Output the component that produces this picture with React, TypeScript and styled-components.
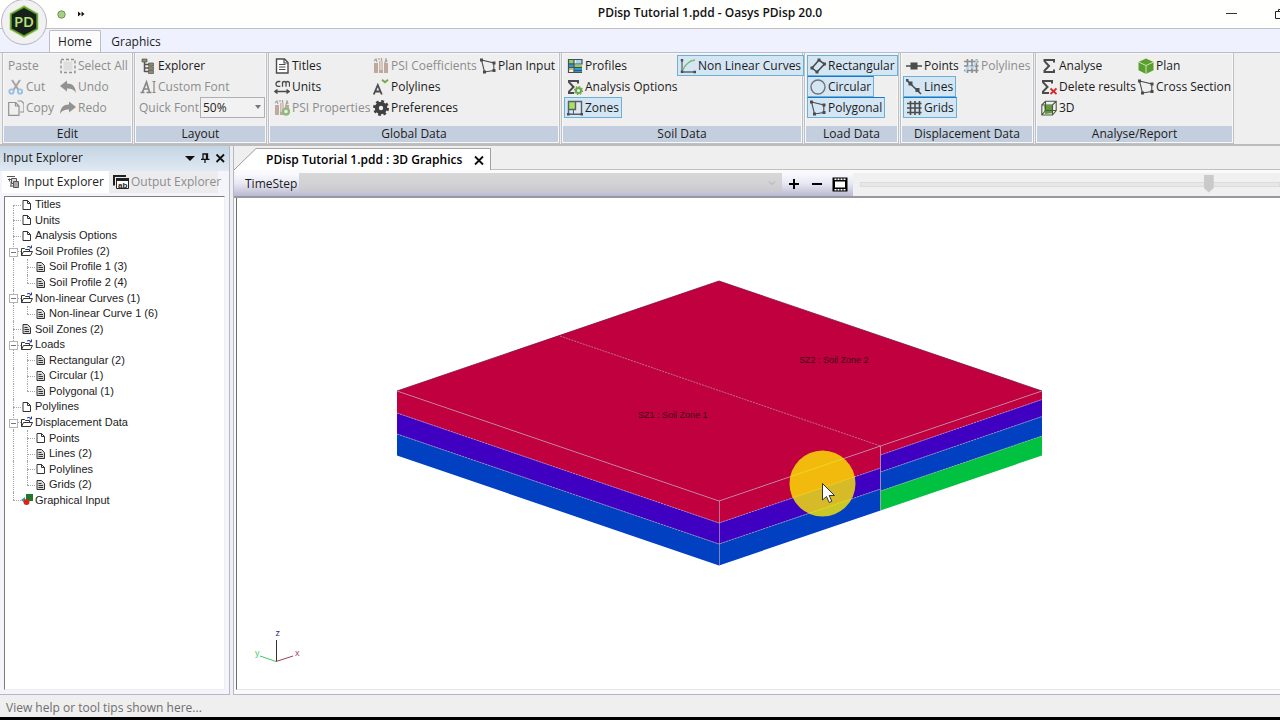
import React from "react";
import styled, { createGlobalStyle } from "styled-components";

const uiFont = `"Open Sans", "Noto Sans", sans-serif`;
const classicFont = `"Liberation Sans", Arial, sans-serif`;

const GlobalStyle = createGlobalStyle`
  * { box-sizing: border-box; }
  body { margin: 0; background: #efefef; overflow: hidden; }
  button, select, input { font: inherit; color: inherit; margin: 0; }
`;

const Window = styled.div`
  display: flex;
  flex-direction: column;
  height: 100vh;
  overflow: hidden;
  font: 12px/16px ${uiFont};
  color: #1c1c1c;
  background: #efefef;
  border-bottom: 3px solid #000;
`;

/* ---------- title bar ---------- */

const Header = styled.header`
  position: relative;
  flex: none;
`;

const TitleBar = styled.div`
  display: flex;
  height: 28px;
  align-items: center;
  background: #fffffd;
`;

const QuickAccess = styled.div`
  display: flex;
  align-items: center;
  gap: 11px;
  width: 204px;
  padding-left: 57px;
  height: 26px;
`;

const Title = styled.h1`
  flex: 1;
  margin: 0;
  padding-bottom: 2px;
  text-align: center;
  font: 600 12px/16px ${uiFont};
  color: #111;
`;

const WindowControls = styled.div`
  display: flex;
  width: 64px;
  gap: 28px;
  padding-left: 5px;
  overflow: hidden;
`;

const PlainButton = styled.button`
  display: flex;
  align-items: center;
  justify-content: center;
  flex: none;
  padding: 0;
  border: 0;
  background: none;
`;

const Orb = styled.button`
  position: absolute;
  left: 1px;
  top: -1px;
  width: 46px;
  height: 46px;
  padding: 0;
  border: 1px solid #b4b4bc;
  border-radius: 50%;
  background: #f1f1f4;
  z-index: 2;
  svg { display: block; }
`;

const TabStrip = styled.nav`
  display: flex;
  align-items: flex-end;
  height: 24px;
  padding-left: 49px;
  border-top: 1px solid #c0c0c4;
  background: #eff1ff;
`;

const RibbonTab = styled.button<{ $active?: boolean }>`
  height: 22px;
  width: ${(p) => (p.$active ? 52 : 70)}px;
  padding: 0;
  border: 1px solid ${(p) => (p.$active ? "#bcbcc2" : "transparent")};
  border-bottom: 0;
  border-radius: 2px 2px 0 0;
  background: ${(p) => (p.$active ? "#fcfcfc" : "transparent")};
`;

/* ---------- ribbon ---------- */

const Ribbon = styled.div`
  display: flex;
  gap: 1px;
  flex: none;
  height: 94px;
  padding: 0 2px;
  border-top: 1px solid #b8bcc8;
  border-bottom: 2px solid #bcbcbc;
  background: #efefef;
`;

const Group = styled.section<{ $width: number }>`
  display: flex;
  flex-direction: column;
  flex: none;
  width: ${(p) => p.$width}px;
  border: 1px solid #bdc1c6;
  border-top: 0;
  box-shadow: inset 0 0 0 1px #f8f8f8;
`;

const GroupBody = styled.div<{ $columns: string }>`
  display: grid;
  grid-template-columns: ${(p) => p.$columns};
  flex: 1;
  padding: 2px 0 0 2px;
`;

const GroupCaption = styled.h2`
  margin: 0 1px 1px;
  height: 16px;
  text-align: center;
  font: 400 12px/16px ${uiFont};
  background: #c3cfdf;
`;

const Column = styled.div`
  display: flex;
  flex-direction: column;
  align-items: flex-start;
  min-width: 0;
`;

const ToolButton = styled.button`
  display: flex;
  align-items: center;
  gap: 2px;
  height: 21px;
  padding: 0 2px;
  border: 1px solid transparent;
  background: none;
  white-space: nowrap;
  line-height: 18px;
  svg { flex: none; display: block; }

  &:disabled { color: #8d8d8d; }
  &:disabled svg { opacity: 0.6; }
  &[aria-pressed="true"] {
    border-color: #6db0d6;
    background: #d4e6f4;
  }
  &[aria-pressed="true"] + &[aria-pressed="true"] {
    border-top-color: #1478d0;
  }
`;

const QuickFontRow = styled.div`
  display: flex;
  align-items: center;
  gap: 1px;
  height: 21px;
  padding-left: 2px;
  color: #8d8d8d;
`;

const SelectBox = styled.span`
  position: relative;
  display: flex;
  svg { position: absolute; right: 4px; top: 8px; pointer-events: none; }
`;

const FontSelect = styled.select`
  appearance: none;
  width: 65px;
  height: 21px;
  padding: 0 2px;
  border: 1px solid #b0b0b0;
  border-radius: 0;
  background: #f2f2f2;
  color: #222;
`;

/* ---------- work area ---------- */

const Work = styled.div`
  display: flex;
  flex: 1;
  min-height: 0;
`;

const Explorer = styled.aside`
  display: flex;
  flex-direction: column;
  flex: none;
  width: 230px;
  margin-right: 3px;
  border-right: 1px solid #b4b6cc;
  border-bottom: 1px solid #b4b6cc;
  background: #f4f4fa;
`;

const ExplorerTitle = styled.div`
  display: flex;
  align-items: center;
  height: 25px;
  flex: none;
  padding: 0 3px 2px 3px;
  background: linear-gradient(#c4d4e3, #dfe9f3);
`;

const ExplorerHeading = styled.h2`
  flex: 1;
  margin: 0;
  font: 400 12px/16px ${uiFont};
`;

const TitleButtons = styled.div`
  display: flex;
  gap: 3px;
`;

const ExplorerTabs = styled.div`
  display: flex;
  flex: none;
  height: 22px;
  margin-bottom: 3px;
  padding-left: 2px;
`;

const ExplorerTab = styled.button<{ $active?: boolean }>`
  display: flex;
  align-items: center;
  gap: 2px;
  width: ${(p) => (p.$active ? 107 : 109)}px;
  padding: 0 3px 0 4px;
  border: 0;
  white-space: nowrap;
  background: ${(p) => (p.$active ? "#fff" : "#ececee")};
  color: ${(p) => (p.$active ? "#222" : "#8d8d8d")};
  svg { flex: none; }
`;

const TreePanel = styled.div`
  flex: 1;
  min-height: 0;
  margin: 0 4px 4px 4px;
  border: 1px solid #ececf2;
  border-top-color: #7c7c7c;
  border-left-color: #7c7c7c;
  background: #fff;
  overflow: hidden;
`;

const TreeList = styled.ul`
  display: grid;
  grid-auto-rows: 1fr;
  height: 311px;
  margin: 0;
  padding: 0 0 0 8px;
  list-style: none;
  font: 11px/15px ${classicFont};
  color: #222;
`;

const TreeItem = styled.li`
  display: flex;
  align-items: stretch;
  min-height: 0;
`;

const Guide = styled.span<{ $trunk: "full" | "upper" | "lower" | "none"; $branch?: boolean; $level: number }>`
  position: relative;
  flex: none;
  width: ${(p) => (p.$level ? 14 : 8)}px;
  &::before {
    content: "";
    position: absolute;
    left: 0;
    top: ${(p) => (p.$trunk === "lower" ? "50%" : "0")};
    bottom: ${(p) => (p.$trunk === "upper" ? "50%" : "0")};
    border-left: ${(p) => (p.$trunk === "none" ? "0" : "1px dotted #a4a4a4")};
  }
  &::after {
    content: "";
    position: absolute;
    left: 0;
    width: 8px;
    top: 50%;
    border-top: ${(p) => (p.$branch ? "1px dotted #a4a4a4" : "0")};
  }
`;

const Expander = styled.button`
  position: absolute;
  left: -4px;
  top: 4px;
  z-index: 1;
  width: 9px;
  height: 9px;
  padding: 0;
  border: 1px solid #b4b4b4;
  background: linear-gradient(#777, #777) center / 5px 1px no-repeat #fff;
`;

const TreeLabel = styled.span`
  display: flex;
  align-items: center;
  gap: 2px;
  white-space: nowrap;
  svg { flex: none; }
`;

/* ---------- document ---------- */

const DocumentArea = styled.main`
  display: flex;
  flex-direction: column;
  flex: 1;
  min-width: 0;
  border-left: 1px solid #b4b6cc;
  border-bottom: 1px solid #b4b6cc;
  background: #fafafa;
`;

const DocTabs = styled.div`
  display: flex;
  height: 24px;
  flex: none;
  padding-top: 2px;
  background: #efefef;
`;

const DocTab = styled.div`
  display: flex;
  align-items: center;
  justify-content: space-between;
  width: 235px;
  padding: 0 5px 0 10px;
  border-top: 1px solid #a8a8a8;
  border-right: 1px solid #a0a0a0;
  background: #fff;
  font-weight: 600;
  color: #000;
  white-space: nowrap;
`;

const DocTabsRest = styled.div`
  flex: 1;
  border-bottom: 1px solid #c0c0c0;
`;

const TimeBar = styled.div`
  display: flex;
  flex: none;
  height: 28px;
  padding-top: 3px;
  border-bottom: 2px solid #98989e;
`;

const TimeControls = styled.div`
  display: flex;
  width: calc(59% + 2px);
  align-items: flex-start;
  border-radius: 4px 0 0 0;
  background: linear-gradient(#fafaff, #e8e8f4 45%, #b9b9d0);
`;

const TimeLabel = styled.label`
  width: 65px;
  padding: 3px 0 0 11px;
  line-height: 16px;
`;

const TimeSelectBox = styled.span`
  position: relative;
  display: flex;
  flex: 1;
  height: 19px;
  svg { position: absolute; right: 6px; top: 8px; }
`;

const TimeSelect = styled.select`
  appearance: none;
  flex: 1;
  border: 0;
  border-radius: 0;
  background: #c9c9c9;
`;

const TimeButtons = styled.div`
  display: flex;
  gap: 7px;
  height: 21px;
  padding: 0 5px 0 4px;
`;

const SliderWrap = styled.div`
  flex: 1;
  padding: 1px 0 0 7px;
  background: #f0f0f0;
`;

const Slider = styled.input`
  appearance: none;
  display: block;
  width: 100%;
  height: 20px;
  background: none;
  &::-webkit-slider-runnable-track {
    height: 5px;
    border: 1px solid #dcdcdc;
    background: #e7e7e7;
  }
  &::-webkit-slider-thumb {
    appearance: none;
    width: 10px;
    height: 18px;
    margin-top: -8px;
    background: #cacaca;
    clip-path: polygon(0 0, 100% 0, 100% 75%, 50% 100%, 0 75%);
  }
`;

const Viewport = styled.div`
  flex: 1;
  min-height: 0;
  margin: 0 0 4px 2px;
  border-left: 1px solid #6c6c6c;
  border-bottom: 1px solid #e4e4ea;
  background: #fff;
  svg { display: block; width: 100%; height: 100%; }
`;

const StatusBar = styled.footer`
  flex: none;
  height: 22px;
  padding: 4px 6px 0;
  line-height: 17px;
  color: #6e6e6e;
`;

/* ---------- icons ---------- */

const DARK = "#4b4b4b";
const GREEN = "#6aa84a";

const Svg = ({ children, size = 16 }: { children: React.ReactNode; size?: number }) => (
  <svg width={size} height={16} viewBox={`0 0 ${size} 16`} fill="none" aria-hidden="true">
    {children}
  </svg>
);

const quad = (
  <>
    <path d="M1.500 2 13.800 5V12.500L4.500 14Z" stroke={DARK} strokeWidth="1.100" />
    <path d="M0 .5h3v3H0zM12.500 3.500h3v3h-3zM12.500 11h3v3h-3zM3 12.500h3v3H3z" fill={DARK} />
  </>
);
const sigma = <path d="M13 4.500V2H3.500v1.200L8 8l-4.500 4.600V14H13v-2.500" stroke={DARK} strokeWidth="2" />;
const grid = <path d="M4.500 1v14M9 1v14M13.500 1v14M1 3.500h14.500M1 8h14.500M1 12.500h14.500" stroke={DARK} strokeWidth="1.600" />;
const psi = (
  <>
    <path d="M1 5h4v10H1zM6 3h4v12H6zM11 5h4v10h-4z" fill="#a07c66" />
    <path d="M1 3l2-2 1 3M6 2V0M8.500 3V0M12 5l1-4 1 3" stroke="#777" strokeWidth="1.300" />
    <path d="M7.200 3v9M9 3v9" stroke="#e8d8cc" />
  </>
);

const icons: Record<string, React.ReactNode> = {
  cut: (
    <>
      <path d="M4 1l6.500 10M12 1 5.500 11" stroke="#777" strokeWidth="2" />
      <circle cx="3.500" cy="12.500" r="2.200" stroke="#5aa0e0" strokeWidth="1.800" />
      <circle cx="12" cy="12.500" r="2.200" stroke="#5aa0e0" strokeWidth="1.800" />
    </>
  ),
  copy: (
    <>
      <path d="M9.500 1h4l2.500 2.500V12h-4" stroke="#555" strokeWidth="1.200" />
      <path d="M.7 2.500h7L11 6v9.300H.7zM7.500 2.500V6H11" stroke="#555" strokeWidth="1.200" />
    </>
  ),
  selectAll: (
    <>
      <path d="M3.500 3.500h9v9h-9z" fill="#d4d4d4" />
      <path d="M1 1.500h14v13H1z" stroke="#555" strokeWidth="1.400" strokeDasharray="3 2" />
    </>
  ),
  undo: <path d="M0 7 7 1.500v3c5.500 0 8.500 3 9 9.500C14 10.500 11 9.500 7 9.500v3z" fill="#555" />,
  redo: <path d="M16 7 9 1.500v3C3.500 4.500.5 7.500 0 14 2 10.500 5 9.500 9 9.500v3z" fill="#555" />,
  explorer: (
    <>
      <path d="M4.500 3v11M4.500 6.500H9M4.500 10H9M4.500 13.500H9" stroke="#555" strokeWidth="1.500" />
      <path d="M2 1h5v3H2zM8.500 5h5v3h-5zM8.500 8.800h5v3h-5zM8.500 12.500h5v3h-5z" fill="#8c8c6c" stroke="#555" strokeWidth=".7" />
    </>
  ),
  font: (
    <>
      <path d="M.5 13.500h4M6.500 13.500h5M2.500 13 6.500 3l3 10M4 10h5" stroke="#444" strokeWidth="1.700" />
      <path d="M14 3v10M12.500 2.500h3M12.500 13.500h3" stroke="#444" strokeWidth="1.200" />
    </>
  ),
  titles: (
    <>
      <path d="M2.500 1h8L14 4.500V15H2.500z" fill="#fff" stroke={DARK} strokeWidth="1.400" />
      <path d="M10 1v4h4M5 6.500h6.500M5 9h6.500M5 11.500h6.500" stroke={DARK} strokeWidth="1.200" />
    </>
  ),
  units: (
    <>
      <path d="M6.300 2.500H4.500Q2 2.500 2 5t2.500 2.300h1.800M8.500 7.800V2.500M8.500 4.500q0-2 1.800-2t1.700 2v3.300M12 4.500q0-2 1.700-2t1.800 2v3.300" stroke={DARK} strokeWidth="1.300" />
      <path d="M1 12.500h14M3.500 10.500 1 12.500l2.500 2M12.500 10.500l2.500 2-2.500 2" stroke={DARK} strokeWidth="1.500" />
    </>
  ),
  psiProps: (
    <>
      {psi}
      <circle cx="12" cy="11.500" r="3" fill="#efefef" stroke="#4f9a32" strokeWidth="2.500" />
    </>
  ),
  psi,
  polyA: (
    <>
      <path d="M.8 15.500 4.800 6l4 9.500M2.500 12.500h5" stroke={DARK} strokeWidth="1.800" />
      <path d="M9 .8l3 2.400 3-2.400" stroke="#78a848" strokeWidth="2" />
    </>
  ),
  gear: (
    <>
      <circle cx="8" cy="8" r="4.200" stroke="#404040" strokeWidth="4" />
      <circle cx="8" cy="8" r="6.700" stroke="#404040" strokeWidth="2.600" strokeDasharray="2.760 2.500" />
    </>
  ),
  quad,
  profiles: (
    <>
      <path d="M1 1h6v4H1zM7 7h8v3H7z" fill="#8fcf5a" />
      <path d="M1 5h6v4H1zM7 10h8v5H7z" fill="#2c9bd6" />
      <path d="M9 1h6v5H9z" fill="#a8d8ef" />
      <path d="M1 9h5v3H1z" fill="#c9c25a" />
      <path d="M1.500 1v14M7 1v14M1 1.500h14V6H1M1 9.500h14M7 12.500h8M1 14.500h14" stroke="#46505a" strokeWidth="1.200" />
    </>
  ),
  sigmaGear: (
    <>
      <path d="M11 4.500V2H2v1.200L6.500 8 2 12.600V14h5" stroke={DARK} strokeWidth="2" />
      <circle cx="11.500" cy="11.500" r="2.600" stroke={GREEN} strokeWidth="2" />
      <circle cx="11.500" cy="11.500" r="4" stroke={GREEN} strokeWidth="1.200" strokeDasharray="1.600 1.500" />
    </>
  ),
  zones: (
    <>
      <path d="M2 2h6v7H2z" fill="#a8e060" />
      <path d="M9 2h5v12H6.500v-4H9z" fill="#e4e8ee" />
      <path d="M1.500 1v13.500M1 1.500h13.500V14M8.500 1v8.500H2M1 14.300h15" stroke="#56606c" strokeWidth="1.400" />
      <path d="M6.500 10v4" stroke="#56606c" />
      <path d="M0 13h2.500v2.500H0zM13.500 13H16v2.500h-2.500z" fill={DARK} />
    </>
  ),
  curve: (
    <>
      <path d="M2 1v13h14" stroke="#5c6670" strokeWidth="1.300" />
      <path d="M3 12C5 7 8 3 15 2" stroke="#7cba70" strokeWidth="1.300" />
      <path d="M.8 1H3.200v2.500H.8zM.8 12.500h2.500V15H.8zM13.500 12.800H16V15.200h-2.500z" fill={DARK} />
    </>
  ),
  rect: (
    <>
      <path d="M2 10 9 2l5.500 4L7 14z" stroke={DARK} strokeWidth="1.600" />
      <path d="M.5 8.500h3v3h-3zM7.500.5h3v3h-3zM13 4.500h3v3h-3zM5.500 12.500h3v3h-3z" fill={DARK} />
    </>
  ),
  circle: <circle cx="8" cy="8" r="7" stroke="#6c747c" strokeWidth="1.400" />,
  point: <path d="M0 7.300h16v1.400H0zM4.500 4.500h7v7h-7z" fill={DARK} />,
  line: (
    <>
      <path d="M1 1.500 15 15" stroke={DARK} strokeWidth="1.600" />
      <path d="M2.500 2.500h4v4h-4zM9.500 9h4v4h-4zM0 0h2.500v2.500H0z" fill={DARK} />
    </>
  ),
  grid,
  polyGrid: (
    <>
      {grid}
      <path d="M2 14 6 8l4 2 4-8" stroke="#8cc4ee" strokeWidth="1.800" />
    </>
  ),
  sigma,
  sigmaX: (
    <>
      <path d="M11 4.500V2H2v1.200L6.500 8 2 12.600V14h6" stroke={DARK} strokeWidth="2" />
      <path d="M9.500 9.500l6 5.500M15.500 9.500l-6 5.500" stroke="#d8282c" strokeWidth="1.800" />
    </>
  ),
  cube3d: (
    <>
      <path d="M3 5.500h9V13l-8 1z" fill="#5f9c36" />
      <path d="M.8 5 4.500 1.200h10.700v9.300L11.500 15H.8zM.8 5h10.700V15M11.500 5l3.700-3.800M4.500 1.200v9.300h10.700M4.500 10.500.8 15" stroke="#4c5a40" strokeWidth="1.100" />
    </>
  ),
  plan: (
    <>
      <path d="M8 .5 15.500 4v8.200L8 16 .5 12.200V4z" fill="#5a9f2e" />
      <path d="M.5 4 8 7.500 15.500 4M8 7.500V16" stroke="#d8ecc8" strokeWidth=".9" />
    </>
  ),
};

const treeIcons: Record<string, React.ReactNode> = {
  page: <path d="M2 1.500h4.500L9.500 4.500v6H2zM6.500 1.500v3h3" fill="#fff" stroke="#333" />,
  doc: (
    <>
      <path d="M2 1.500h4.500L9.500 4.500v6H2z" fill="#d8d8d8" stroke="#333" />
      <path d="M3.500 4.500h3M3.500 6.500H8M3.500 8.500H8" stroke="#333" />
    </>
  ),
  folder: (
    <>
      <path d="M.5 10.500v-7h3l1 1h4v2M.5 10.500l2-4h9l-2 4z" fill="#fff" stroke="#333" />
      <path d="M6 2q2-1.500 4 .5M10.500.5v2.500H8.500" stroke="#223a9c" />
    </>
  ),
  shapes: (
    <>
      <path d="M0 6 4 3v6z" fill="#22a0b4" />
      <path d="M5 0h7v7H5z" fill="#1d7a2c" />
      <circle cx="5.500" cy="8" r="3" fill="#d8261c" />
    </>
  ),
};

const TreeIcon = ({ name }: { name: string }) => (
  <svg width="12" height="12" viewBox="0 0 12 12" fill="none" aria-hidden="true">
    {treeIcons[name]}
  </svg>
);

/* ---------- data ---------- */

type Tool = { label: string; icon?: string; disabled?: boolean; on?: boolean };
type RibbonGroup = { caption: string; width: number; columns: string; tools: Tool[][]; quickFont?: boolean };

const groups: RibbonGroup[] = [
  {
    caption: "Edit", width: 131, columns: "52px 1fr",
    tools: [
      [{ label: "Paste", disabled: true }, { label: "Cut", icon: "cut", disabled: true }, { label: "Copy", icon: "copy", disabled: true }],
      [{ label: "Select All", icon: "selectAll", disabled: true }, { label: "Undo", icon: "undo", disabled: true }, { label: "Redo", icon: "redo", disabled: true }],
    ],
  },
  {
    caption: "Layout", width: 133, columns: "1fr", quickFont: true,
    tools: [[{ label: "Explorer", icon: "explorer" }, { label: "Custom Font", icon: "font", disabled: true }]],
  },
  {
    caption: "Global Data", width: 292, columns: "99px 107px 1fr",
    tools: [
      [{ label: "Titles", icon: "titles" }, { label: "Units", icon: "units" }, { label: "PSI Properties", icon: "psiProps", disabled: true }],
      [{ label: "PSI Coefficients", icon: "psi", disabled: true }, { label: "Polylines", icon: "polyA" }, { label: "Preferences", icon: "gear" }],
      [{ label: "Plan Input", icon: "quad" }],
    ],
  },
  {
    caption: "Soil Data", width: 242, columns: "113px 1fr",
    tools: [
      [{ label: "Profiles", icon: "profiles" }, { label: "Analysis Options", icon: "sigmaGear" }, { label: "Zones", icon: "zones", on: true }],
      [{ label: "Non Linear Curves", icon: "curve", on: true }],
    ],
  },
  {
    caption: "Load Data", width: 95, columns: "1fr",
    tools: [[{ label: "Rectangular", icon: "rect", on: true }, { label: "Circular", icon: "circle", on: true }, { label: "Polygonal", icon: "quad", on: true }]],
  },
  {
    caption: "Displacement Data", width: 134, columns: "57px 1fr",
    tools: [
      [{ label: "Points", icon: "point" }, { label: "Lines", icon: "line", on: true }, { label: "Grids", icon: "grid", on: true }],
      [{ label: "Polylines", icon: "polyGrid", disabled: true }],
    ],
  },
  {
    caption: "Analyse/Report", width: 199, columns: "97px 1fr",
    tools: [
      [{ label: "Analyse", icon: "sigma" }, { label: "Delete results", icon: "sigmaX" }, { label: "3D", icon: "cube3d" }],
      [{ label: "Plan", icon: "plan" }, { label: "Cross Section", icon: "quad" }],
    ],
  },
];

type Node = { label: string; icon: string; level: 0 | 1; last?: boolean };

const nodes: Node[] = [
  { label: "Titles", icon: "page", level: 0 },
  { label: "Units", icon: "page", level: 0 },
  { label: "Analysis Options", icon: "page", level: 0 },
  { label: "Soil Profiles (2)", icon: "folder", level: 0 },
  { label: "Soil Profile 1 (3)", icon: "doc", level: 1 },
  { label: "Soil Profile 2 (4)", icon: "doc", level: 1, last: true },
  { label: "Non-linear Curves (1)", icon: "folder", level: 0 },
  { label: "Non-linear Curve 1 (6)", icon: "doc", level: 1, last: true },
  { label: "Soil Zones (2)", icon: "doc", level: 0 },
  { label: "Loads", icon: "folder", level: 0 },
  { label: "Rectangular (2)", icon: "doc", level: 1 },
  { label: "Circular (1)", icon: "doc", level: 1 },
  { label: "Polygonal (1)", icon: "doc", level: 1, last: true },
  { label: "Polylines", icon: "page", level: 0 },
  { label: "Displacement Data", icon: "folder", level: 0 },
  { label: "Points", icon: "page", level: 1 },
  { label: "Lines (2)", icon: "doc", level: 1 },
  { label: "Polylines", icon: "page", level: 1 },
  { label: "Grids (2)", icon: "doc", level: 1, last: true },
  { label: "Graphical Input", icon: "shapes", level: 0, last: true },
];

/* ---------- parts ---------- */

const AppOrb = () => (
  <Orb aria-label="Application menu">
    <svg width="44" height="44" viewBox="0 0 44 44">
      <path d="M22 5 36.500 13.300v16.400L22 38 7.500 29.700V13.300z" fill="#b4dc7c" />
      <path d="M22 7 35 14.200v14.600L22 36 9 28.800V14.200z" fill="#17201a" stroke="#5f9c2e" strokeWidth="1.500" />
      <text x="22" y="27" textAnchor="middle" fontFamily={uiFont} fontSize="15" fontWeight="600" fill="#b9e37a">PD</text>
    </svg>
  </Orb>
);

const QuickFont = () => (
  <QuickFontRow>
    <label htmlFor="quick-font">Quick Font</label>
    <SelectBox>
      <FontSelect id="quick-font" defaultValue="50%">
        <option>50%</option>
        <option>100%</option>
      </FontSelect>
      <svg width="6" height="4" viewBox="0 0 6 4"><path d="M0 0h6L3 4z" fill="#777" /></svg>
    </SelectBox>
  </QuickFontRow>
);

const RibbonSection = ({ group }: { group: RibbonGroup }) => (
  <Group $width={group.width}>
    <GroupBody $columns={group.columns}>
      {group.tools.map((tools, i) => (
        <Column key={i}>
          {tools.map((tool) => (
            <ToolButton key={tool.label} disabled={tool.disabled} aria-pressed={tool.on}>
              {tool.icon && <Svg>{icons[tool.icon]}</Svg>}
              {tool.label}
            </ToolButton>
          ))}
          {group.quickFont && <QuickFont />}
        </Column>
      ))}
    </GroupBody>
    <GroupCaption>{group.caption}</GroupCaption>
  </Group>
);

const Tree = () => (
  <TreeList>
    {nodes.map((node, i) => {
      const ends = node.last ? "upper" : "full";
      return (
        <TreeItem key={i}>
          <Guide
            $level={node.level}
            $trunk={node.level ? "full" : i === 0 ? "lower" : ends}
            $branch={node.level === 0}
          >
            {node.icon === "folder" && <Expander aria-label={`Collapse ${node.label}`} />}
          </Guide>
          {node.level === 1 && <Guide $level={0} $trunk={ends} $branch />}
          <TreeLabel>
            <TreeIcon name={node.icon} />
            {node.label}
          </TreeLabel>
        </TreeItem>
      );
    })}
  </TreeList>
);

const RED = "#c10040";
const VIOLET = "#4000c1";
const BLUE = "#0040c1";

const Scene = () => (
  <svg viewBox="237 198 1043 491" role="img" aria-label="Soil zones in three dimensions">
    <path d="M397 391 719 281 1042 391 719 501z" fill={RED} />
    <path d="M397 391 719 501V523L397 413z" fill={RED} />
    <path d="M397 413 719 523V544L397 434z" fill={VIOLET} />
    <path d="M397 434 719 544V565.500L397 455.500z" fill={BLUE} />
    <path d="M719 501 880.500 446V468L719 523z" fill={RED} />
    <path d="M719 523 880.500 468V489L719 544z" fill={VIOLET} />
    <path d="M719 544 880.500 489V510.500L719 565.500z" fill={BLUE} />
    <path d="M880.500 446 1042 391V399.500L880.500 455z" fill={RED} />
    <path d="M880.500 455 1042 399.500V416.500L880.500 472z" fill={VIOLET} />
    <path d="M880.500 472 1042 416.500V436L880.500 491z" fill={BLUE} />
    <path d="M880.500 491 1042 436V455.500L880.500 510.500z" fill="#00c140" />
    <g fill="none" stroke="#b8a0b8" strokeWidth=".7">
      <path d="M397 391 719 501 1042 391M719.500 501V565M880.500 446V510" />
      <path d="M397 413 719 523 880.500 468M397 434 719 544 880.500 489M880.500 455 1042 399.500M880.500 472 1042 416.500M880.500 491 1042 436" strokeDasharray="2 1" />
      <path d="M560 336 880.500 446" strokeDasharray="2 1" />
    </g>
    <path d="M397 391 719 281 1042 391" fill="none" stroke="#7a1040" strokeWidth=".8" />
    <g fontFamily={classicFont} fontSize="9" fill="#3c0818">
      <text x="799" y="363">SZ2 : Soil Zone 2</text>
      <text x="638" y="418">SZ1 : Soil Zone 1</text>
    </g>
    <circle cx="822.500" cy="483.500" r="33" fill="#fce800" fillOpacity=".8" />
    <path d="M822.500 483.500v16.500l4-3.500 2.700 6 2.600-1.200-2.600-5.800h5.300z" fill="#fff" stroke="#333" />
    <g strokeWidth="1" fill="none">
      <path d="M276.500 640v21.500" stroke="#333" />
      <path d="M276 661.500 293 656" stroke="#a0405c" />
      <path d="M276 661.500 260 656" stroke="#40c860" />
    </g>
    <g fontFamily={classicFont} fontSize="9">
      <text x="275.500" y="636" fill="#28288c">z</text>
      <text x="295" y="656" fill="#b04060">x</text>
      <text x="255" y="656" fill="#50c868">y</text>
    </g>
  </svg>
);

export default function App() {
  return (
    <Window>
      <GlobalStyle />
      <Header>
        <AppOrb />
        <TitleBar>
          <QuickAccess>
            <svg width="9" height="9" viewBox="0 0 9 9"><circle cx="4.500" cy="4.500" r="3.700" fill="#a4d080" stroke="#6f8f5c" /></svg>
            <svg width="8" height="6" viewBox="0 0 8 6"><path d="M1 .5 4 3 1 5.500zM4.500.5l3 2.500-3 2.500z" fill="#111" /></svg>
          </QuickAccess>
          <Title>PDisp Tutorial 1.pdd - Oasys PDisp 20.0</Title>
          <WindowControls>
            <PlainButton aria-label="Minimise">
              <svg width="21" height="12" viewBox="0 0 21 12"><path d="M5 5.500h11" stroke="#333" /></svg>
            </PlainButton>
            <PlainButton aria-label="Restore">
              <svg width="12" height="12" viewBox="0 0 12 12" fill="none" stroke="#222"><path d="M8.500 3.500V1.500H14M5.500 3.500v7H14V3.500z" /></svg>
            </PlainButton>
          </WindowControls>
        </TitleBar>
        <TabStrip>
          <RibbonTab $active>Home</RibbonTab>
          <RibbonTab>Graphics</RibbonTab>
        </TabStrip>
      </Header>
      <Ribbon>
        {groups.map((group) => (
          <RibbonSection key={group.caption} group={group} />
        ))}
      </Ribbon>
      <Work>
        <Explorer>
          <ExplorerTitle>
            <ExplorerHeading>Input Explorer</ExplorerHeading>
            <TitleButtons>
              <PlainButton aria-label="Options">
                <svg width="12" height="12" viewBox="0 0 12 12"><path d="M1 4h10L6 9z" fill="#111" /></svg>
              </PlainButton>
              <PlainButton aria-label="Pin">
                <svg width="12" height="12" viewBox="0 0 12 12" fill="none" stroke="#111" strokeWidth="1.300"><path d="M4 7V2h4.500v5M2 7.300h8.500M6 7.500V11M7.500 2v5" /></svg>
              </PlainButton>
              <PlainButton aria-label="Close">
                <svg width="12" height="12" viewBox="0 0 12 12"><path d="M2.500 2.500l7.500 7.500M10 2.500 2.500 10" stroke="#111" strokeWidth="1.800" /></svg>
              </PlainButton>
            </TitleButtons>
          </ExplorerTitle>
          <ExplorerTabs>
            <ExplorerTab $active>
              <Svg>
                <path d="M1 2.500h8M3.500 4.500v3M5 7.500v5M2 5.500h3M4 12h3" stroke="#555" />
                <path d="M5.500 4.500h5v5h-5z" fill="#ddd" stroke="#555" />
                <path d="M7.500 7.500h5v6h-5z" fill="#a8a8a8" stroke="#555" />
              </Svg>
              Input Explorer
            </ExplorerTab>
            <ExplorerTab>
              <Svg>
                <path d="M1 11.500V2h12" stroke="#222" strokeWidth="2" />
                <path d="M3.500 4.500h12v10h-12z" fill="#fff" stroke="#222" />
                <path d="M3 4h13v3H3z" fill="#222" />
                <text x="5" y="13.500" fontFamily={classicFont} fontSize="8" fontWeight="700" fill="#222">ab</text>
              </Svg>
              Output Explorer
            </ExplorerTab>
          </ExplorerTabs>
          <TreePanel>
            <Tree />
          </TreePanel>
        </Explorer>
        <DocumentArea>
          <DocTabs>
            <svg width="22" height="22" viewBox="0 0 22 22"><path d="M0 22 22 0v22z" fill="#fff" /><path d="M0 22 22 .5" stroke="#999" /></svg>
            <DocTab>
              PDisp Tutorial 1.pdd : 3D Graphics
              <PlainButton aria-label="Close document">
                <svg width="12" height="12" viewBox="0 0 12 12"><path d="M2 2.500l8 8M10 2.500l-8 8" stroke="#111" strokeWidth="1.800" /></svg>
              </PlainButton>
            </DocTab>
            <DocTabsRest />
          </DocTabs>
          <TimeBar>
            <TimeControls>
              <TimeLabel htmlFor="time-step">TimeStep</TimeLabel>
              <TimeSelectBox>
                <TimeSelect id="time-step" disabled />
                <svg width="8" height="5" viewBox="0 0 8 5"><path d="M1 .5 4 3.500 7 .5" fill="none" stroke="#aaa" /></svg>
              </TimeSelectBox>
              <TimeButtons>
                <PlainButton aria-label="Zoom in">
                  <svg width="16" height="16" viewBox="0 0 16 16"><path d="M8 3v10M3 8h10" stroke="#000" strokeWidth="2" /></svg>
                </PlainButton>
                <PlainButton aria-label="Zoom out">
                  <svg width="16" height="16" viewBox="0 0 16 16"><path d="M3 8h10" stroke="#000" strokeWidth="2" /></svg>
                </PlainButton>
                <PlainButton aria-label="Record animation">
                  <svg width="16" height="16" viewBox="0 0 16 16">
                    <path d="M.5 1.500h15v14H.5z" fill="#000" />
                    <path d="M3 5.500h10v6H3zM2.500 2.500h2v1.500h-2zM5.500 2.500h2v1.500h-2zM8.500 2.500h2v1.500h-2zM11.500 2.500h2v1.500h-2zM2.500 13h2v1.500h-2zM5.500 13h2v1.500h-2zM8.500 13h2v1.500h-2zM11.500 13h2v1.500h-2z" fill="#fff" />
                  </svg>
                </PlainButton>
              </TimeButtons>
            </TimeControls>
            <SliderWrap>
              <Slider type="range" min={0} max={100} defaultValue={84} aria-label="Time position" />
            </SliderWrap>
          </TimeBar>
          <Viewport>
            <Scene />
          </Viewport>
        </DocumentArea>
      </Work>
      <StatusBar>View help or tool tips shown here...</StatusBar>
    </Window>
  );
}
